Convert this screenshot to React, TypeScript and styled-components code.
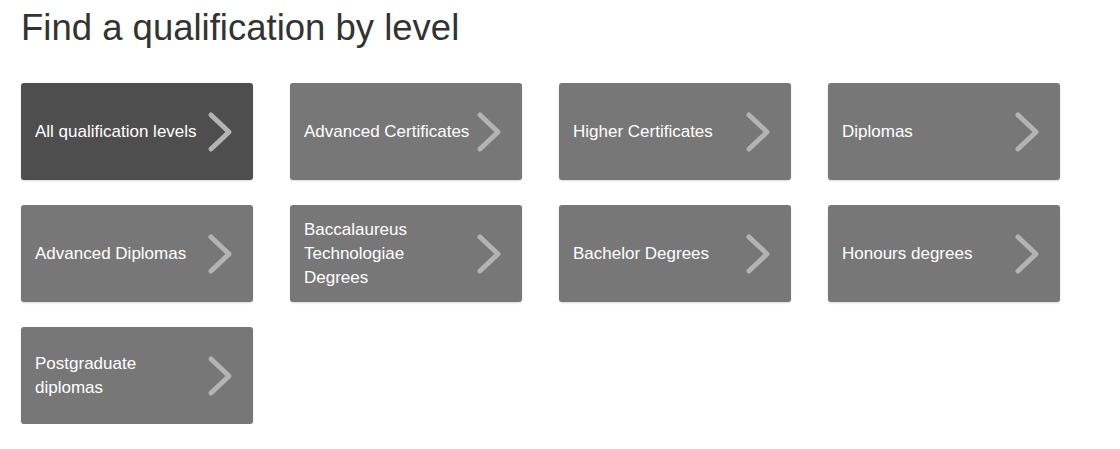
import React from 'react';
import styled, { createGlobalStyle } from 'styled-components';

const GlobalStyle = createGlobalStyle`
  html, body {
    margin: 0;
    padding: 0;
    background: #ffffff;
  }
  body {
    font-family: 'Liberation Sans', Arial, sans-serif;
  }
`;

const Page = styled.div`
  padding: 7px 21px 0 21px;
`;

const Title = styled.h1`
  margin: 0 0 34px 0;
  font-size: 36.5px;
  font-weight: 400;
  line-height: 42px;
  color: #333333;
`;

const Grid = styled.div`
  display: grid;
  grid-template-columns: repeat(4, 232px);
  column-gap: 37px;
  row-gap: 25px;
`;

interface TileProps {
  $active?: boolean;
}

const Tile = styled.a<TileProps>`
  display: flex;
  align-items: center;
  justify-content: space-between;
  height: 97px;
  box-sizing: border-box;
  padding: 0 20px 0 14px;
  border-radius: 3px;
  background: ${(p) => (p.$active ? '#4e4e4e' : '#777777')};
  box-shadow: 0 1px 2px rgba(0, 0, 0, 0.15);
  text-decoration: none;
  cursor: pointer;
`;

const Label = styled.span`
  color: #ffffff;
  font-size: 17px;
  line-height: 24px;
  max-width: 167px;
`;

const Chevron = styled.svg`
  flex: none;
  width: 26px;
  height: 42px;
`;

const levels = [
  'All qualification levels',
  'Advanced Certificates',
  'Higher Certificates',
  'Diplomas',
  'Advanced Diplomas',
  'Baccalaureus Technologiae Degrees',
  'Bachelor Degrees',
  'Honours degrees',
  'Postgraduate diplomas',
];

function Arrow() {
  return (
    <Chevron viewBox="0 0 26 42">
      <path
        d="M4 4 L22 21 L4 38"
        fill="none"
        stroke="#b3b3b3"
        strokeWidth="5"
        strokeLinecap="round"
        strokeLinejoin="round"
      />
    </Chevron>
  );
}

export default function App() {
  return (
    <Page>
      <GlobalStyle />
      <Title>Find a qualification by level</Title>
      <Grid>
        {levels.map((name, i) => (
          <Tile key={name} $active={i === 0}>
            <Label>{name}</Label>
            <Arrow />
          </Tile>
        ))}
      </Grid>
    </Page>
  );
}
